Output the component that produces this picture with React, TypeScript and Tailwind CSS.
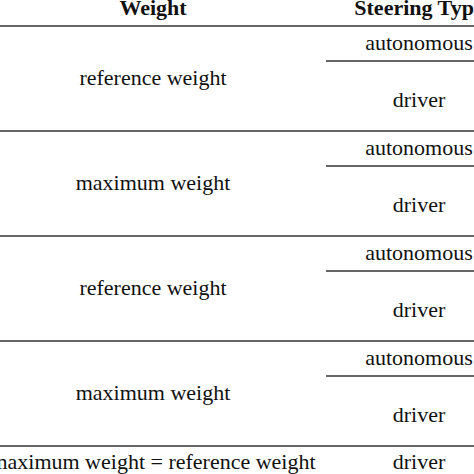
import React from "react";

function Group({ weight }: { weight: string }) {
  return (
    <div className="flex w-[512px] h-[105px] border-b-2 border-[#666]">
      <div className="w-[326px] pr-[20px] flex justify-center pt-[38px] whitespace-nowrap leading-[26px]">
        {weight}
      </div>
      <div className="w-[186px] flex flex-col">
        <div className="h-[35px] border-b-2 border-[#666] flex justify-center pt-[3px] leading-[26px] whitespace-nowrap">
          autonomous
        </div>
        <div className="flex justify-center pt-[25px] leading-[26px]">driver</div>
      </div>
    </div>
  );
}

export default function App() {
  return (
    <div className="w-[474px] h-[474px] overflow-hidden bg-white text-[#111] font-['Liberation_Serif',serif] text-[22px]">
      <div className="flex w-[512px] h-[27px] border-b-2 border-[#666] font-bold leading-[16px]">
        <div className="w-[326px] pr-[20px] flex justify-center">Weight</div>
        <div className="w-[186px] flex justify-center whitespace-nowrap">Steering Type</div>
      </div>
      <Group weight="reference weight" />
      <Group weight="maximum weight" />
      <Group weight="reference weight" />
      <Group weight="maximum weight" />
      <div className="flex w-[512px] leading-[26px]">
        <div className="w-[326px] pr-[20px] flex justify-center pt-[2px] whitespace-nowrap">
          maximum weight = reference weight
        </div>
        <div className="w-[186px] flex justify-center pt-[2px]">driver</div>
      </div>
    </div>
  );
}
